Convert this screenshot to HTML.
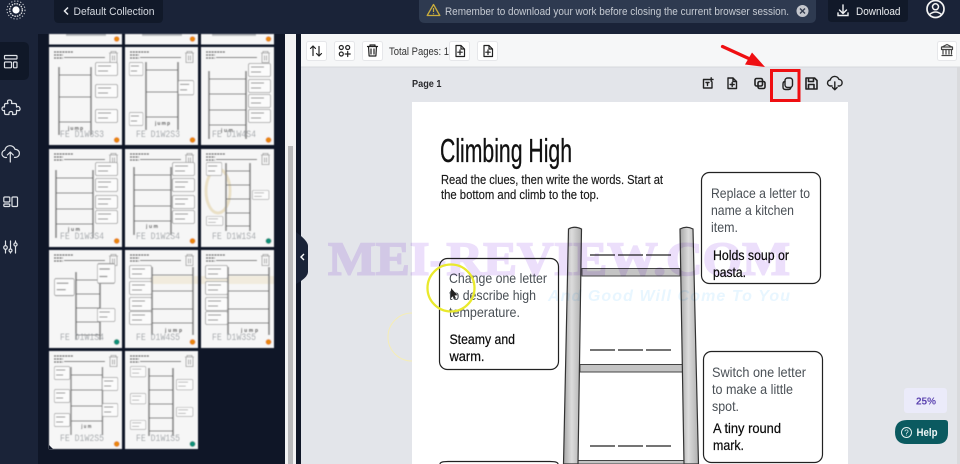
<!DOCTYPE html>
<html lang="en"><head><meta charset="utf-8"><title>Default Collection</title>
<style>
html,body{margin:0;padding:0;width:960px;height:464px;overflow:hidden;background:#1a2338}
svg{display:block;position:absolute;left:0;top:0}
text{font-family:"Liberation Sans",sans-serif}
.ui{font-size:11px;fill:#d5d9e0}
.clue{font-size:14px;fill:#4a5056}
.ans{font-size:14px;fill:#0a0a0a;stroke:#0a0a0a;stroke-width:.2}
.id{font-family:"Liberation Mono",monospace;font-size:10px;fill:#a3a7ab}
.ic{fill:none;stroke:#222;stroke-width:1.2;stroke-linecap:round;stroke-linejoin:round}
.btn{fill:#fff;stroke:#e6e7ea;stroke-width:1}
</style></head><body>
<svg width="960" height="464" viewBox="0 0 960 464" xmlns="http://www.w3.org/2000/svg">
<defs>
<filter id="bl" x="-5%" y="-5%" width="110%" height="110%"><feGaussianBlur stdDeviation=".45"/></filter>
<linearGradient id="rail" x1="0" x2="1" y1="0" y2="0"><stop offset="0" stop-color="#a5a5a5"/><stop offset=".45" stop-color="#dcdcdc"/><stop offset="1" stop-color="#b0b0b0"/></linearGradient>
<g id="base">
  <rect width="73" height="98" fill="#f6f6f6"/>
  <path d="M5 5h19M5 8h9M5 11h9" stroke="#444" stroke-width="1.300" fill="none" stroke-dasharray="2 .8"/>
  <path d="M15 10.500h41" stroke="#666" stroke-width="1.100" fill="none"/>
  <path d="M60 6h9M62 6V4.500h5V6M61 6.500v9h7v-9M63.500 8.500v5M65.500 8.500v5" stroke="#9a9a9a" stroke-width=".8" fill="none"/>
</g>
<g id="bx"><rect x=".5" y=".5" width="22" height="13" rx="1.500" fill="#fbfbfb" stroke="#999" stroke-width=".8"/><path d="M3 4h13M3 9h10" stroke="#8a8a8a" stroke-width=".9"/></g>
<g id="lad3"><path d="M0 0V68M32 0V68" stroke="#8e8e8e" stroke-width="1.800"/><path d="M0 8H32M0 30H32M0 55H32" stroke="#777" stroke-width="1.100"/><text x="9" y="63" font-size="5" font-weight="700" fill="#333" textLength="15">jump</text></g>
<g id="lad4"><path d="M0 0V68M37 0V68" stroke="#8e8e8e" stroke-width="1.800"/><path d="M0 8H37M0 23H37M0 39H37M0 54H37" stroke="#777" stroke-width="1.100"/><text x="12" y="61" font-size="5" font-weight="700" fill="#333" textLength="12">jum</text></g>
<g id="ladn"><path d="M0 0V68M24 0V68" stroke="#8e8e8e" stroke-width="1.800"/><path d="M0 8H24M0 22H24M0 36H24M0 50H24M0 63H24" stroke="#777" stroke-width="1.100"/></g>
<g id="ladw"><path d="M0 0V68M41 0V68" stroke="#8e8e8e" stroke-width="1.800"/><path d="M0 8H41M0 24H41M0 42H41M0 56H41" stroke="#777" stroke-width="1.100"/><text x="13" y="65" font-size="5" font-weight="700" fill="#333" textLength="17">jump</text></g>
</defs>

<!-- app background -->
<rect width="960" height="464" fill="#1a2338"/>
<rect x="38" y="34" width="248" height="430" fill="#0f1627"/>
<rect x="285" y="34" width="11" height="430" fill="#f2f2f3"/>
<rect x="288" y="146" width="5" height="318" fill="#b9b9bb"/>
<rect x="296" y="34" width="5" height="430" fill="#0f1627"/>

<!-- right workspace -->
<rect x="301" y="34" width="659" height="430" fill="#e3e5ea"/>
<rect x="301" y="34" width="659" height="33" fill="#f6f7f8"/>
<rect x="301" y="66.500" width="659" height="1" fill="#d6d8dc"/>
<rect x="957" y="67" width="3" height="397" fill="#d9dadd"/>

<!-- collapse handle -->
<path d="M296 232l5 4q7 6 7 10v26q0 4-7 9l-5 3z" fill="#1a2338"/>
<path d="M304 254l-3 3 3 3" fill="none" stroke="#fff" stroke-width="1.400"/>

<!-- top bar -->
<g>
  <circle cx="16" cy="10" r="3.600" fill="#fff"/>
  <circle cx="16" cy="10" r="6.300" fill="none" stroke="#e8e8e8" stroke-width="1.300" stroke-dasharray="1.500 1"/>
  <circle cx="16" cy="10" r="9" fill="none" stroke="#c9ccd2" stroke-width="1.100" stroke-dasharray="1.200 1.900"/>
  <path d="M54 0H163V18q0 5-5 5H59q-5 0-5-5z" fill="#111929"/>
  <path d="M68 7.500l-3.500 3.500 3.500 3.500" fill="none" stroke="#e8eaee" stroke-width="1.500"/>
  <text class="ui" x="73.500" y="15" textLength="81" lengthAdjust="spacingAndGlyphs">Default Collection</text>
  <path d="M419 0H816V17q0 6-6 6H425q-6 0-6-6z" fill="#2e3a50"/>
  <path d="M433.500 4.500l-6.300 11h12.600z" fill="none" stroke="#c9ad3c" stroke-width="1.300" stroke-linejoin="round"/>
  <path d="M433.500 8v4M433.500 13.200v1" stroke="#c9ad3c" stroke-width="1.200"/>
  <text class="ui" x="445" y="15" textLength="344" lengthAdjust="spacingAndGlyphs" style="fill:#c6cbd3">Remember to download your work before closing the current browser session.</text>
  <circle cx="802.500" cy="11" r="6" fill="#c4c7cd"/>
  <path d="M800 8.500l5 5M805 8.500l-5 5" stroke="#333c4e" stroke-width="1.400"/>
  <path d="M828 0H908V18q0 4-4 4H832q-4 0-4-4z" fill="#111929"/>
  <path d="M843 5v8M839.500 10l3.500 3.500 3.500-3.500M838 13v2.500h10V13" fill="none" stroke="#f0f1f3" stroke-width="1.400" stroke-linecap="round"/>
  <text class="ui" x="856" y="15" textLength="44.500" lengthAdjust="spacingAndGlyphs" style="fill:#eceef1">Download</text>
  <circle cx="935.500" cy="9" r="8.500" fill="none" stroke="#f4f4f4" stroke-width="1.700"/>
  <circle cx="935.500" cy="6.800" r="3" fill="none" stroke="#f4f4f4" stroke-width="1.500"/>
  <path d="M929.500 14.500q6-5 12 0" fill="none" stroke="#f4f4f4" stroke-width="1.500"/>
</g>

<!-- side nav -->
<path d="M0 42h23q6 0 6 6v26q0 6-6 6H0z" fill="#101828"/>
<g style="fill:none;stroke:#dfe2e7;stroke-width:1.200;stroke-linecap:round;stroke-linejoin:round">
  <rect x="4.500" y="55.500" width="12.500" height="3.500" rx=".8"/><rect x="4.500" y="62" width="7" height="5.800" rx=".8"/><rect x="13.500" y="62" width="3.500" height="5.800" rx=".8"/>
  <path d="M8 103.500q-1.500-3.500 1.500-3.500t2 3.500h3.500q1.500 0 1.500 1.500v2q3-1.500 3.500 1.500t-3.500 1.800v2.700q0 1.500-1.500 1.500h-2.500q1-3-1.500-3t-2 3H6q-1.500 0-1.500-1.500v-2.500q-2.500.5-2.500-1.800t2.500-1.700V105q0-1.500 1.500-1.500z"/>
  <path d="M6.500 157.500h-1a3.700 3.700 0 0 1-.7-7.300 5.300 5.300 0 0 1 10.300-.8 4 4 0 0 1 .6 8h-1.200M10.300 162v-9.500M7.300 155l3-3 3 3"/>
  <rect x="3.800" y="197" width="6" height="5" rx="1"/><rect x="12" y="197" width="5.500" height="9.500" rx="1"/><rect x="3.800" y="204" width="6" height="2.500" rx="1"/>
  <path d="M5.500 241v4.500M5.500 249.500v3.500M10.500 241v7.500M10.500 252v1M15.500 241v1.500M15.500 246.500v6.500"/>
  <circle cx="5.500" cy="247.500" r="1.800"/><circle cx="10.500" cy="250.500" r="1.500"/><circle cx="15.500" cy="244.500" r="1.600"/>
</g>

<!-- thumbnails -->
<g filter="url(#bl)">
  <rect x="49" y="34" width="73" height="10.500" fill="#f6f6f6"/><rect x="66" y="34" width="40" height="2" fill="#b9bcbf"/>
  <rect x="125" y="34" width="73" height="10.500" fill="#f6f6f6"/><rect x="142" y="34" width="40" height="2" fill="#b9bcbf"/>
  <rect x="201" y="34" width="73" height="10.500" fill="#f6f6f6"/><rect x="212" y="34" width="44" height="2" fill="#b9bcbf"/>
  <circle cx="116.700" cy="39" r="2.800" fill="#e8860f"/><circle cx="192.500" cy="39" r="2.800" fill="#e8860f"/><circle cx="268.500" cy="39" r="2.800" fill="#e8860f"/>

  <!-- row 1 -->
  <g transform="translate(49,47)"><use href="#base"/><use href="#lad3" x="10" y="20"/><use href="#bx" x="46" y="15"/><use href="#bx" x="46" y="37"/><use href="#bx" x="46" y="62"/><text class="id" x="11" y="90" textLength="44" lengthAdjust="spacingAndGlyphs">FE D1W3S3</text><circle cx="67.700" cy="93" r="2.900" fill="#e8860f"/></g>
  <g transform="translate(125,47)"><use href="#base"/><use href="#lad3" x="21" y="15"/><use href="#bx" x="4" y="15" transform="translate(4,15) scale(.62,1) translate(-4,-15)"/><use href="#bx" x="4" y="65" transform="translate(4,65) scale(.62,1) translate(-4,-65)"/><use href="#bx" x="53" y="33" transform="translate(53,33) scale(.7,1.100) translate(-53,-33)"/><text class="id" x="11" y="90" textLength="44" lengthAdjust="spacingAndGlyphs">FE D1W2S3</text><circle cx="67.500" cy="93" r="2.900" fill="#e8860f"/></g>
  <g transform="translate(201,47)"><use href="#base"/><use href="#lad4" x="8" y="24"/><use href="#bx" x="47" y="16"/><use href="#bx" x="47" y="32"/><use href="#bx" x="47" y="47"/><use href="#bx" x="47" y="62"/><text class="id" x="11" y="90" textLength="44" lengthAdjust="spacingAndGlyphs">FE D1W4S4</text><circle cx="67.500" cy="93" r="2.900" fill="#e8860f"/></g>

  <!-- row 2 -->
  <g transform="translate(49,149)"><use href="#base"/><use href="#lad4" x="7" y="21"/><use href="#bx" x="46" y="13"/><use href="#bx" x="46" y="29"/><use href="#bx" x="46" y="46"/><use href="#bx" x="46" y="61"/><text class="id" x="11" y="90" textLength="44" lengthAdjust="spacingAndGlyphs">FE D1W3S4</text><circle cx="67.700" cy="92" r="2.900" fill="#e8860f"/></g>
  <g transform="translate(125,149)"><use href="#base"/><use href="#lad4" x="9" y="18"/><use href="#bx" x="47" y="13"/><use href="#bx" x="47" y="29"/><use href="#bx" x="47" y="46"/><use href="#bx" x="47" y="61"/><text class="id" x="11" y="90" textLength="44" lengthAdjust="spacingAndGlyphs">FE D1W2S4</text><circle cx="67.500" cy="92" r="2.900" fill="#e8860f"/></g>
  <g transform="translate(201,149)"><use href="#base"/><ellipse cx="17" cy="42" rx="12" ry="22" fill="none" stroke="#e6d7b2" stroke-width="3" opacity=".7"/><use href="#ladn" x="25" y="14"/><use href="#bx" x="5" y="13" transform="translate(5,13) scale(.7,1) translate(-5,-13)"/><use href="#bx" x="5" y="67" transform="translate(5,67) scale(.75,.7) translate(-5,-67)"/><use href="#bx" x="51" y="41" transform="translate(51,41) scale(.75,.7) translate(-51,-41)"/><text class="id" x="11" y="90" textLength="44" lengthAdjust="spacingAndGlyphs">FE D1W1S4</text><circle cx="67.500" cy="92" r="2.900" fill="#0d8f78"/></g>

  <!-- row 3 -->
  <g transform="translate(49,250)"><use href="#base"/><use href="#ladn" x="27" y="22"/><use href="#bx" x="5" y="28" transform="translate(5,28) scale(.9,1.300) translate(-5,-28)"/><use href="#bx" x="48" y="13" transform="translate(48,13) scale(.8,1.500) translate(-48,-13)"/><use href="#bx" x="48" y="58" transform="translate(48,58) scale(.8,1) translate(-48,-58)"/><text class="id" x="11" y="90" textLength="44" lengthAdjust="spacingAndGlyphs">FE D1W1S4</text><circle cx="67.700" cy="92" r="2.900" fill="#0d8f78"/></g>
  <g transform="translate(125,250)"><use href="#base"/><rect x="25" y="26" width="48" height="8" fill="#ecdcb8" opacity=".4"/><use href="#ladw" x="27" y="17"/><use href="#bx" x="4" y="15"/><use href="#bx" x="4" y="31"/><use href="#bx" x="4" y="47"/><use href="#bx" x="4" y="61"/><text class="id" x="11" y="90" textLength="44" lengthAdjust="spacingAndGlyphs">FE D1W4S5</text><circle cx="67.500" cy="92" r="2.900" fill="#e8860f"/></g>
  <g transform="translate(201,250)"><use href="#base"/><rect x="0" y="26" width="73" height="8" fill="#ecdcb8" opacity=".4"/><use href="#ladw" x="27" y="17"/><use href="#bx" x="4" y="15"/><use href="#bx" x="4" y="31"/><use href="#bx" x="4" y="47"/><use href="#bx" x="4" y="61"/><text class="id" x="11" y="90" textLength="44" lengthAdjust="spacingAndGlyphs">FE D1W3S5</text><circle cx="67.500" cy="92" r="2.900" fill="#e8860f"/></g>

  <!-- row 4 -->
  <g transform="translate(49,351)"><use href="#base"/><use href="#lad4" x="22" y="16" transform="translate(22,16) scale(.85,1) translate(-22,-16)"/><use href="#bx" x="5" y="15" transform="translate(5,15) scale(.7,1) translate(-5,-15)"/><use href="#bx" x="5" y="38" transform="translate(5,38) scale(.7,1) translate(-5,-38)"/><use href="#bx" x="5" y="62" transform="translate(5,62) scale(.7,1) translate(-5,-62)"/><use href="#bx" x="53" y="26" transform="translate(53,26) scale(.7,1) translate(-53,-26)"/><use href="#bx" x="53" y="52" transform="translate(53,52) scale(.7,1) translate(-53,-52)"/><text class="id" x="11" y="90" textLength="44" lengthAdjust="spacingAndGlyphs">FE D1W2S5</text><circle cx="67.700" cy="93" r="2.900" fill="#e8860f"/></g>
  <g transform="translate(125,351)"><use href="#base"/><use href="#ladn" x="24" y="17"/><use href="#bx" x="5" y="15" transform="translate(5,15) scale(.7,.8) translate(-5,-15)"/><use href="#bx" x="5" y="42" transform="translate(5,42) scale(.7,.8) translate(-5,-42)"/><use href="#bx" x="5" y="69" transform="translate(5,69) scale(.7,.7) translate(-5,-69)"/><use href="#bx" x="51" y="28" transform="translate(51,28) scale(.75,.8) translate(-51,-28)"/><use href="#bx" x="51" y="56" transform="translate(51,56) scale(.75,.7) translate(-51,-56)"/><text class="id" x="11" y="90" textLength="44" lengthAdjust="spacingAndGlyphs">FE D1W1S5</text><circle cx="67.500" cy="93" r="2.900" fill="#0d8f78"/></g>
</g>
<path d="M49 445v4h4z" fill="#0f1627"/>

<!-- toolbar -->
<rect class="btn" x="306.500" y="41.500" width="20" height="19" rx="2"/>
<rect class="btn" x="334.500" y="41.500" width="20" height="19" rx="2"/>
<rect class="btn" x="362.500" y="41.500" width="20" height="19" rx="2"/>
<rect class="btn" x="449.500" y="41.500" width="20" height="19" rx="2"/>
<rect class="btn" x="477.500" y="41.500" width="20" height="19" rx="2"/>
<rect class="btn" x="937.500" y="41.500" width="19" height="19" rx="2"/>
<g class="ic">
  <path d="M313 55.500V46M310.500 48.500l2.500-2.500 2.500 2.500M319 46.500V56M316.500 53.500l2.500 2.500 2.500-2.500"/>
  <circle cx="341.300" cy="47.500" r="2"/><circle cx="347.700" cy="47.500" r="2"/><circle cx="341.300" cy="54" r="2"/><path d="M347.700 51.500v5M345.200 54h5"/>
  <path d="M367.500 46.500h10M370 46.500V45h5v1.500M368.500 46.500l.6 9.500h6.800l.6-9.500M371 49v5M374 49v5"/>
  <path d="M456 45.500h5l3.500 3.500v7.500h-8.500zM461 45.500V49h3.500M460 50v4.500M457.800 52.200h4.400"/>
  <path d="M484 45.500h5l3.500 3.500v7.500h-8.500zM489 45.500V49h3.500M488 50v4.500M485.800 52.200h4.400"/>
  <path d="M942 47l5-2.500 5 2.500zM943 49.500V54M946 49.500V54M949 49.500V54M951.500 49.500V54M942 55.500h10M941.500 47v2.500h11V47" style="stroke:#444"/>
</g>
<text x="389" y="55" font-size="11" fill="#333" textLength="60" lengthAdjust="spacingAndGlyphs">Total Pages: 1</text>

<!-- page header -->
<text x="412" y="87" font-size="10" font-weight="700" fill="#2a2a2e" textLength="29.500" lengthAdjust="spacingAndGlyphs">Page 1</text>
<g class="ic" style="stroke-width:1.400">
  <path d="M708.500 79.500h-5V88h8.500v-6M709.500 79.500h3.500M711.200 77.800v3.500M706 82.500h3M707.500 82.500v3"/>
  <path d="M728 78h5l3.500 3.500V88.500H728zM733 78v3.500h3.500M732.200 82.500v4M730.200 84.500h4"/>
  <rect x="755" y="78.500" width="7.500" height="7.500" rx="1.600" style="stroke-width:1.600"/><rect x="758" y="81.500" width="7" height="7" rx="1.600" style="stroke-width:1.600"/>
  <path d="M785 81.500q-2 .2-2 2.500v3q0 2.500 2.500 2.500h3q2 0 2.300-1.700"/><rect x="785" y="78" width="7.500" height="9.500" rx="2.600"/>
  <path d="M806 78h8.500l2.500 2.500V89h-11zM808.500 78v3.500h5V78M808.500 89v-4.500h5.500V89" style="stroke-width:1.600"/>
  <path d="M832 86h-1.300a3 3 0 0 1-.4-6 4.500 4.500 0 0 1 8.600-.7 3.400 3.400 0 0 1 .6 6.700h-1.300M834.800 82v7.500M832.500 87.500l2.300 2.300 2.300-2.300"/>
</g>

<!-- worksheet page -->
<rect x="412" y="102" width="436" height="362" fill="#fff"/>
<text x="440" y="162" font-size="33" fill="#111" stroke="#111" stroke-width=".3" textLength="132" lengthAdjust="spacingAndGlyphs">Climbing High</text>
<text x="441" y="184" font-size="12.500" fill="#1a1a1a" stroke="#1a1a1a" stroke-width=".15" textLength="222" lengthAdjust="spacingAndGlyphs">Read the clues, then write the words. Start at</text>
<text x="441" y="199" font-size="12.500" fill="#1a1a1a" stroke="#1a1a1a" stroke-width=".15" textLength="158" lengthAdjust="spacingAndGlyphs">the bottom and climb to the top.</text>

<!-- ladder -->
<g>
  <path d="M582 268.500H680V276H582zM580 364.500H684V372H580zM578 460.500H686V464H578z" fill="#c4c4c4" stroke="#444" stroke-width=".9"/>
  <path d="M568.500 229q6-3.500 13 0L578 464H563.500z" fill="url(#rail)" stroke="#333" stroke-width="1.200"/>
  <path d="M680 229q6.500-3.500 13 0L698.500 464H684z" fill="url(#rail)" stroke="#333" stroke-width="1.200"/>
  <path d="M590 255h25M618 255h25M646 255h25M590 350h25M618 350h25M646 350h25M590 446h25M618 446h25M646 446h25" stroke="#222" stroke-width="1.200"/>
</g>

<!-- clue boxes -->
<rect x="439.500" y="258.500" width="119" height="111" rx="8" fill="#fff" stroke="#222" stroke-width="1.200"/>
<rect x="701.500" y="172.500" width="119" height="111" rx="8" fill="#fff" stroke="#222" stroke-width="1.200"/>
<rect x="703.500" y="351.500" width="119" height="111" rx="8" fill="#fff" stroke="#222" stroke-width="1.200"/>
<path d="M440 464V469M440 464q0-2.500 8-2.500h102q8 0 8 2.500" fill="#fff" stroke="#222" stroke-width="1.200"/>

<text class="clue" x="449" y="283" textLength="98" lengthAdjust="spacingAndGlyphs">Change one letter</text>
<text class="clue" x="449" y="300" textLength="87" lengthAdjust="spacingAndGlyphs">to describe high</text>
<text class="clue" x="449" y="317" textLength="71" lengthAdjust="spacingAndGlyphs">temperature.</text>
<text class="ans" x="449.500" y="344" textLength="65.500" lengthAdjust="spacingAndGlyphs">Steamy and</text>
<text class="ans" x="449.500" y="361" textLength="35" lengthAdjust="spacingAndGlyphs">warm.</text>

<text class="clue" x="711" y="198" textLength="99" lengthAdjust="spacingAndGlyphs">Replace a letter to</text>
<text class="clue" x="711" y="215" textLength="83" lengthAdjust="spacingAndGlyphs">name a kitchen</text>
<text class="clue" x="711" y="232" textLength="27" lengthAdjust="spacingAndGlyphs">item.</text>
<text class="ans" x="713" y="260" textLength="76" lengthAdjust="spacingAndGlyphs">Holds soup or</text>
<text class="ans" x="713" y="277" textLength="33" lengthAdjust="spacingAndGlyphs">pasta.</text>

<text class="clue" x="712" y="377" textLength="94" lengthAdjust="spacingAndGlyphs">Switch one letter</text>
<text class="clue" x="712" y="394" textLength="81" lengthAdjust="spacingAndGlyphs">to make a little</text>
<text class="clue" x="712" y="411" textLength="27" lengthAdjust="spacingAndGlyphs">spot.</text>
<text class="ans" x="713" y="433" textLength="68" lengthAdjust="spacingAndGlyphs">A tiny round</text>
<text class="ans" x="713" y="450" textLength="31" lengthAdjust="spacingAndGlyphs">mark.</text>

<!-- watermark -->
<g style="mix-blend-mode:multiply">
  <text x="328" y="275" font-size="48" font-weight="700" fill="#ecdffb" stroke="#ecdffb" stroke-width="1.600" style="font-family:'Liberation Serif',serif" textLength="462" lengthAdjust="spacingAndGlyphs">MEI-REVIEW.COM</text>
  <text x="548" y="301" font-size="16" font-weight="700" font-style="italic" fill="#e8f6ff" style="font-family:'Liberation Sans',sans-serif" textLength="242">And Good Will Come To You</text>
</g>

<!-- cursor highlight -->
<circle cx="451" cy="288" r="23.500" fill="none" stroke="#e9e92c" stroke-width="2.300"/>
<path d="M451 288v10l2.200-2 1.500 3 1.300-.6-1.400-2.900 2.900-.2z" fill="#222"/>
<path d="M412 313a23 23 0 0 0 0 48" fill="none" stroke="#f5edb5" stroke-width="1"/>

<!-- highlight + arrow -->
<rect x="771.500" y="70.500" width="27.500" height="30" fill="none" stroke="#ef0f12" stroke-width="3"/>
<path d="M722.500 46.500L752 60" fill="none" stroke="#ef0f12" stroke-width="3.200" stroke-linecap="round"/>
<path d="M765 67L745 64.500 752 52.500z" fill="#ef0f12"/>

<!-- zoom + help -->
<rect x="904" y="388" width="43" height="25" rx="3" fill="#ebebfa"/>
<text x="916" y="404.500" font-size="10" font-weight="700" fill="#5c44b0" textLength="20" lengthAdjust="spacingAndGlyphs">25%</text>
<path d="M907 420h38q3 0 3 3v10q0 11-11 11h-30q-12 0-12-12t12-12z" fill="#0b5a60"/>
<circle cx="906.500" cy="432.500" r="5" fill="none" stroke="#e4f0f0" stroke-width="1"/>
<text x="906.500" y="435.500" font-size="8" fill="#e4f0f0" text-anchor="middle">?</text>
<text x="916.500" y="436" font-size="11" font-weight="700" fill="#eef6f6" textLength="21" lengthAdjust="spacingAndGlyphs">Help</text>
</svg>
</body></html>
